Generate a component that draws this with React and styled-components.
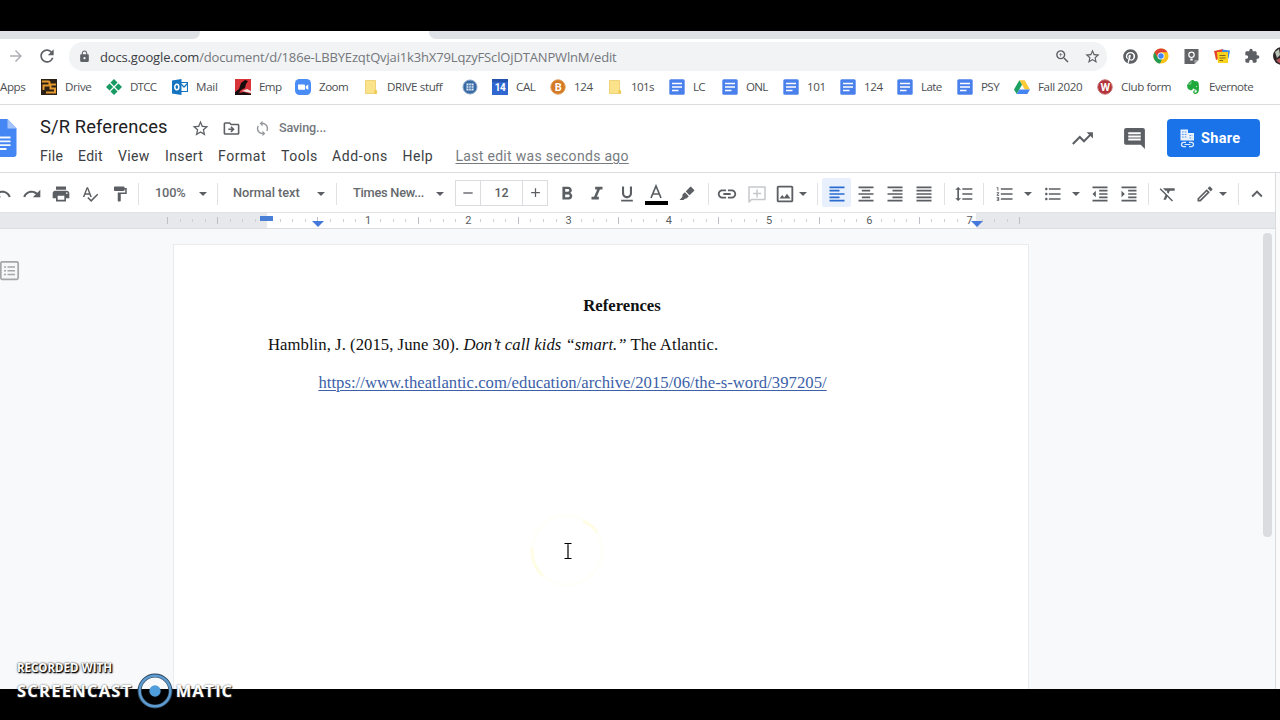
import styled, { createGlobalStyle, css } from 'styled-components';
import {
  MdArrowForward,
  MdRefresh,
  MdLock,
  MdZoomIn,
  MdStarBorder,
  MdExtension,
  MdOutlineDriveFileMove,
  MdSync,
  MdTrendingUp,
  MdComment,
  MdUndo,
  MdRedo,
  MdPrint,
  MdSpellcheck,
  MdFormatPaint,
  MdRemove,
  MdAdd,
  MdFormatBold,
  MdFormatItalic,
  MdFormatUnderlined,
  MdLink,
  MdOutlineImage,
  MdFormatAlignLeft,
  MdFormatAlignCenter,
  MdFormatAlignRight,
  MdFormatAlignJustify,
  MdFormatLineSpacing,
  MdFormatListNumbered,
  MdFormatListBulleted,
  MdFormatIndentDecrease,
  MdFormatIndentIncrease,
  MdFormatClear,
  MdOutlineEdit,
  MdKeyboardArrowUp
} from 'react-icons/md';
import { FaPinterest, FaEvernote } from 'react-icons/fa';

const GlobalStyle = createGlobalStyle`
  * {
    box-sizing: border-box;
  }
  body {
    margin: 0;
    background: #000;
    overflow: hidden;
  }
  svg {
    display: block;
    flex: none;
  }
`;

const Screen = styled.div`
  position: relative;
  width: 1280px;
  height: 720px;
  padding: 31px 0;
  background: #000;
  overflow: hidden;
  display: flex;
  flex-direction: column;
  font-family: Roboto, 'Liberation Sans', sans-serif;
`;

/* browser chrome */

const TabStrip = styled.div`
  flex: none;
  height: 8px;
  display: flex;
  background: #fff;
`;

const TabGap = styled.div`
  background: #dee1e6;
  width: ${p => p.$w}px;
  border-radius: ${p => (p.$side === 'left' ? '0 0 7px 0' : '0 0 0 7px')};
`;

const ActiveTab = styled.div`
  width: 229px;
  background: #fff;
`;

const AddressRow = styled.div`
  flex: none;
  height: 33px;
  padding-top: 1px;
  display: flex;
  align-items: center;
  background: #fff;
  color: #5f6368;
`;

const NavButton = styled.div`
  flex: none;
  width: ${p => p.$w}px;
  display: flex;
  justify-content: center;
  color: ${p => p.$color || '#5c5f63'};
`;

const Omnibox = styled.div`
  flex: none;
  width: 1038px;
  height: 29px;
  margin-left: 7px;
  padding-left: 9px;
  border-radius: 14px;
  background: #f1f3f5;
  display: flex;
  align-items: center;
`;

const Url = styled.div`
  flex: 1;
  padding: 1px 0 0 9px;
  font-family: 'Open Sans', 'Noto Sans', sans-serif;
  font-size: 13px;
  line-height: 20px;
  letter-spacing: ${p => p.$ls || 0}px;
  white-space: nowrap;
  color: #74777b;
  b {
    font-weight: 400;
    color: #3c4043;
  }
`;

const Bookmarks = styled.div`
  flex: none;
  height: 33px;
  display: flex;
  align-items: center;
  padding-bottom: 2px;
  background: #fff;
  border-bottom: 1px solid #dcdde0;
`;

const Bookmark = styled.div`
  flex: none;
  width: ${p => p.$w}px;
  height: 20px;
  display: flex;
  align-items: center;
  gap: 8px;
  font-family: 'Open Sans', 'Noto Sans', sans-serif;
  font-size: 11.6px;
  line-height: 20px;
  letter-spacing: ${p => (p.$ls === undefined ? -0.4 : p.$ls)}px;
  white-space: nowrap;
  color: #4c4f53;
`;

/* docs header */

const Header = styled.div`
  flex: none;
  height: 68px;
  display: flex;
  background: #fff;
  border-bottom: 1px solid #dadce0;
`;

const Logo = styled.div`
  width: 40px;
  padding-top: 14px;
`;

const TitleBlock = styled.div`
  flex: 1;
`;

const TitleRow = styled.div`
  display: flex;
  align-items: center;
  height: 28px;
  margin-top: 9px;
  color: #5f6368;
`;

const DocTitle = styled.div`
  width: 151px;
  font-size: 18.3px;
  line-height: 28px;
  letter-spacing: ${p => p.$ls}px;
  color: #202124;
  white-space: nowrap;
  padding-bottom: 2px;
`;

const Saving = styled.div`
  margin-left: 7px;
  font-size: 12.6px;
  line-height: 18px;
  font-weight: 500;
  letter-spacing: -0.15px;
  color: #74787d;
`;

const MenuBar = styled.div`
  display: flex;
  height: 28px;
  align-items: center;
  font-size: 14px;
  line-height: 20px;
  color: #3c4043;
  white-space: nowrap;
`;

const MenuItem = styled.div`
  flex: none;
  width: ${p => p.$w}px;
  letter-spacing: ${p => (p.$ls === undefined ? 0.3 : p.$ls)}px;
`;

const LastEdit = styled(MenuItem)`
  color: #777b80;
  text-decoration: underline;
  text-underline-offset: 2px;
`;

const HeaderActions = styled.div`
  flex: none;
  display: flex;
  width: 211px;
  align-items: center;
  height: 66px;
  color: #5a5d61;
`;

const ShareButton = styled.div`
  flex: none;
  width: 93px;
  height: 38px;
  margin-left: -7px;
  padding-left: 13px;
  display: flex;
  align-items: center;
  gap: 6px;
  border-radius: 4px;
  background: #1a73e8;
  color: #fff;
  font-size: 14.5px;
  font-weight: 700;
  letter-spacing: 0.3px;
`;

/* toolbar */

const Editor = styled.div`
  flex: 1;
  min-height: 0;
  display: flex;
  background: #fbfbfc;
  overflow: hidden;
`;

const EditorMain = styled.div`
  width: 1276px;
  display: flex;
  flex-direction: column;
  border-right: 1px solid #dadce0;
`;

const Toolbar = styled.div`
  flex: none;
  height: 40px;
  display: flex;
  align-items: center;
  background: #fff;
  border-bottom: 1px solid #e0e2e5;
  overflow: hidden;
  color: #5b5e62;
`;

const Tool = styled.div`
  flex: none;
  width: ${p => p.$w}px;
  height: 29px;
  margin-left: ${p => p.$ml || 0}px;
  padding-top: 3px;
  display: flex;
  flex-direction: column;
  align-items: center;
  justify-content: center;
  ${p =>
    p.$active &&
    css`
      border-radius: 2px;
      background: #e8f0fe;
      color: #2a6bd0;
    `}
  ${p => p.$dim && 'color: #c6c8cb;'}
`;

const SepSlot = styled(Tool)`
  padding-top: 2px;
  &::after {
    content: '';
    width: 1px;
    height: 22px;
    background: #dfe1e4;
  }
`;

const CaretSlot = styled(Tool)`
  padding-top: 2px;
  &::after {
    content: '';
    border: 4.5px solid transparent;
    border-top-color: #5b5e62;
    border-bottom: 0;
  }
`;

const ToolLabel = styled.div`
  flex: none;
  width: ${p => p.$w}px;
  padding-left: ${p => p.$pl}px;
  font-size: 12.8px;
  line-height: 20px;
  font-weight: 500;
  letter-spacing: ${p => p.$ls || 0}px;
  white-space: nowrap;
  color: #66696d;
`;

const SizeBox = styled.div`
  flex: none;
  width: 93px;
  height: 26px;
  margin-left: 3px;
  display: flex;
  border: 1px solid #dadce0;
  font-size: 12.5px;
  font-weight: 500;
`;

const SizeCell = styled.div`
  width: ${p => p.$w}px;
  display: flex;
  align-items: center;
  justify-content: center;
  & + & {
    border-left: 1px solid #dadce0;
  }
`;

const ColorBar = styled.div`
  width: 23px;
  height: 4px;
  margin-top: 2px;
  background: #000;
`;

/* ruler */

const Ruler = styled.div`
  position: relative;
  flex: none;
  height: 16px;
  display: flex;
  background: linear-gradient(90deg, #e6e8ec 267px, #fff 267px, #fff 976px, #e6e8ec 976px);
  border-bottom: 1px solid #d9dce1;
  padding-left: 161.3px;
`;

const RulerCell = styled.div`
  flex: none;
  width: 12.54px;
  height: 15px;
  display: flex;
  align-items: center;
  justify-content: center;
  font-size: 11px;
  color: #5b5e62;
`;

const Tick = styled.div`
  width: 1px;
  height: ${p => (p.$long ? 7 : 3)}px;
  background: ${p => (p.$long ? '#bcbfc3' : '#cdcfd3')};
`;

const FirstLineMarker = styled.div`
  position: absolute;
  left: 260px;
  top: 3px;
  width: 13px;
  height: 5px;
  background: #4a7fd6;
`;

const IndentMarker = styled.div`
  position: absolute;
  left: ${p => p.$x}px;
  top: 8px;
  border: 6px solid transparent;
  border-top: 6.5px solid #4478da;
  border-bottom: 0;
`;

/* document */

const Canvas = styled.div`
  flex: 1;
  min-height: 0;
  display: flex;
  padding-top: 15px;
  background: #f8f9fa;
`;

const OutlineSlot = styled.div`
  flex: none;
  width: 173px;
  padding-top: 17px;
`;

const Page = styled.div`
  flex: none;
  width: 856px;
  height: 460px;
  padding: 42.4px 94px 0;
  background: #fff;
  border: 1px solid #e9ebef;
  font-family: 'Liberation Serif', 'Times New Roman', serif;
  font-size: 16.7px;
  line-height: 38.2px;
  color: #111;
`;

const Heading = styled.div`
  padding-left: 42px;
  text-align: center;
  font-weight: 700;
`;

const Entry = styled.div`
  white-space: nowrap;
  padding-left: ${p => p.$indent || 0}px;
  letter-spacing: ${p => p.$ls || 0}px;
`;

const DocLink = styled.span`
  color: #3c5fa8;
  text-decoration: underline;
  text-underline-offset: 2px;
`;

const Scrollbar = styled.div`
  flex: none;
  width: 9px;
  height: 304px;
  margin: -11px 0 0 234px;
  border-radius: 4px;
  background: #dadce0;
`;

const Pointer = styled.div`
  position: absolute;
  left: 530px;
  top: 514px;
`;

const Watermark = styled.div`
  position: absolute;
  left: 17px;
  top: 661px;
  color: #fff;
  font-family: 'Open Sans', 'Noto Sans', sans-serif;
  font-weight: 700;
`;

const RecordedWith = styled.div`
  font-size: 11.5px;
  line-height: 14px;
  letter-spacing: ${p => p.$ls}px;
  text-shadow: 1px 1px 1px #000, 0 0 2px #222, 1px 1px 2px #333;
`;

const Brand = styled.div`
  display: flex;
  align-items: center;
  height: 34px;
  margin-top: -1px;
  font-size: 16.5px;
  line-height: 20px;
  text-shadow: 0 0 2px #555, 1px 1px 1px #222;
`;

const BrandWord = styled.div`
  width: ${p => p.$w}px;
  letter-spacing: ${p => p.$ls}px;
`;

const FolderIcon = () => (
  <svg width="16" height="16" viewBox="0 0 16 16">
    <path d="M2.5 1.5h10v9l1.2 1v3H2.500z" fill="#fbe38c" stroke="#eccb62" strokeWidth=".8" />
    <path d="M11.500 10.500l2 1.500v2.500h-2z" fill="#eec64a" />
  </svg>
);

const DocIcon = () => (
  <svg width="16" height="16" viewBox="0 0 16 16">
    <rect x=".3" y=".3" width="15.400" height="15.400" rx="1.500" fill="#4a80ec" />
    <path d="M3 4.500h10M3 8h10M3 11.500h6.500" stroke="#fff" strokeWidth="1.700" />
  </svg>
);

const SchoolIcon = () => (
  <svg width="16" height="16" viewBox="0 0 16 16">
    <path d="M0 0h16v16H0z" fill="#2d2116" />
    <path d="M1 2.500h6.500c1.500 0 1.500 4 0 4H2.500V11M15 5.500H9.500v4H14v4H5" fill="none" stroke="#e49a2e" strokeWidth="2" />
  </svg>
);

const DtccIcon = () => (
  <svg width="16" height="16" viewBox="0 0 16 16">
    <path d="M8 0l8 8-8 8-8-8z" fill="#179a63" />
    <path d="M3.500 3.500l9 9M12.500 3.500l-9 9" stroke="#fff" strokeWidth="1.200" />
  </svg>
);

const OutlookIcon = () => (
  <svg width="16" height="16" viewBox="0 0 16 16">
    <path d="M8 3.500h7.500v9H8z" fill="#fff" stroke="#1673c0" strokeWidth="1.200" />
    <path d="M9 5l3 3 3.500-3.500" fill="none" stroke="#1673c0" strokeWidth="1.300" />
    <path d="M0 1.500L9.500 0v16L0 14.500z" fill="#1673c0" />
    <ellipse cx="4.800" cy="8" rx="2" ry="2.700" fill="none" stroke="#fff" strokeWidth="1.500" />
  </svg>
);

const EmpIcon = () => (
  <svg width="16" height="16" viewBox="0 0 16 16">
    <path d="M0 0h16v16H0z" fill="#d8343a" />
    <path d="M0 13l4-3 2-6 4-3 3 1-2 3-1 4-4 2-2 3 5-1 7 2v1H0z" fill="#190c0e" />
    <path d="M7 12l5-2 4 2v2z" fill="#f3e4e2" />
  </svg>
);

const ZoomIcon = () => (
  <svg width="16" height="16" viewBox="0 0 16 16">
    <rect width="16" height="16" rx="4.500" fill="#4a8cf6" />
    <path d="M3 5.500h6a1 1 0 011 1v4.200H4.200A1.200 1.200 0 013 9.500zM10.700 7.200L13.300 5.500v5.200l-2.600-1.500z" fill="#fff" />
  </svg>
);

const GridBadgeIcon = () => (
  <svg width="16" height="16" viewBox="0 0 16 16">
    <circle cx="8" cy="8" r="7" fill="#376aa5" stroke="#88a6c8" strokeWidth="1" />
    <path d="M4.500 4.500h7v7h-7z" fill="#e4edf8" />
    <path d="M4.500 6.800h7M4.500 9.200h7M6.800 4.500v7M9.200 4.500v7" stroke="#376aa5" strokeWidth=".8" />
  </svg>
);

const CalIcon = () => (
  <svg width="16" height="16" viewBox="0 0 16 16">
    <path d="M0 0h16v16H0z" fill="#2f66d0" />
    <path d="M0 0h16v3H0z" fill="#2453ae" />
    <text x="8" y="12.300" fill="#fff" fontSize="10" fontWeight="700" fontFamily="Roboto" textAnchor="middle">14</text>
  </svg>
);

const RoundLetterIcon = ({ letter, color, edge }) => (
  <svg width="16" height="16" viewBox="0 0 16 16">
    <circle cx="8" cy="8" r="7.200" fill={color} stroke={edge} />
    <text x="8" y="12" fill="#fff" fontSize="11" fontWeight="700" fontFamily="Roboto" textAnchor="middle">{letter}</text>
  </svg>
);

const DriveIcon = () => (
  <svg width="16" height="16" viewBox="0 0 16 16">
    <path d="M5.400 1.200h5.200L16 10.500h-5.200z" fill="#fbc934" />
    <path d="M5.400 1.200L8 5.700 2.700 15 0 10.500z" fill="#1aa162" />
    <path d="M5.400 10.500H16L13.300 15H2.700z" fill="#4484f3" />
  </svg>
);

const ChromeIcon = () => (
  <svg width="16" height="16" viewBox="0 0 16 16">
    <circle cx="8" cy="8" r="7.600" fill="#fbc116" />
    <path d="M1.400 4.200A7.600 7.600 0 0114.600 4.300H8L5 10z" fill="#de4435" />
    <path d="M1.400 4.200L5 10l4 1.500-2 4A7.600 7.600 0 011.400 4.200z" fill="#249b55" />
    <circle cx="8" cy="8" r="3.500" fill="#fff" />
    <circle cx="8" cy="8" r="2.700" fill="#4285f4" />
  </svg>
);

const KeepBadgeIcon = () => (
  <svg width="15" height="15" viewBox="0 0 15 15">
    <path d="M.5 0h14v11l-4 4H.500z" fill="#626468" />
    <path d="M10.500 15v-4h4z" fill="#a5a7aa" />
    <circle cx="7.500" cy="5.800" r="2.700" fill="none" stroke="#fff" strokeWidth="1.200" />
    <path d="M6.300 9.500h2.400v2H6.300z" fill="#fff" />
  </svg>
);

const NotesIcon = () => (
  <svg width="16" height="16" viewBox="0 0 16 16">
    <path d="M0 3l9-2 1 8-8 3z" fill="#e5452f" />
    <path d="M8 1.500l8 1-1.500 8-6-1z" fill="#3f8be4" />
    <path d="M3 4h11v11H4z" fill="#fdd21c" />
    <path d="M5.500 7.500h6M5.500 10h6M5.500 12.500h3.500" stroke="#7c6a20" strokeWidth="1" />
  </svg>
);

const AvatarIcon = () => (
  <svg width="18" height="18" viewBox="0 0 18 18">
    <circle cx="9" cy="9" r="9" fill="#2c2527" />
    <path d="M2 5l4-3 1 6-3 3z" fill="#b9c4b6" />
    <path d="M3 13l4-2 2 6-3-1z" fill="#b5535c" />
  </svg>
);

const DocsLogo = () => (
  <svg width="17" height="38" viewBox="0 0 17 38">
    <path d="M-12 0H7.500l9 9.500V35a3 3 0 01-3 3H-12z" fill="#4486f4" />
    <path d="M7.500 0l9 9.500h-9z" fill="#a3c3fa" />
    <path d="M0 18.500h10.500M0 22.300h10.500M0 26.200h10.500M0 30h6.500" stroke="#f3f7fe" strokeWidth="1.800" />
  </svg>
);

const DomainLinkIcon = () => (
  <svg width="15" height="19" viewBox="0 0 15 19">
    <path d="M.5.500h7.500v3.500h6v7.500H.5z" fill="#e9f1fd" />
    <path d="M2 3h4.500M2 5.500h4.500M2 8h4.500M9.500 6.500h3M9.500 9h3" stroke="#5b97ec" strokeWidth="1" strokeDasharray="1.700 1" />
    <path d="M6 13.400H3.600a2.100 2.100 0 000 4.200H6M9 13.400h2.400a2.100 2.100 0 010 4.200H9M4.500 15.500h6" fill="none" stroke="#dfeafc" strokeWidth="1.200" />
  </svg>
);

const HighlighterIcon = () => (
  <svg width="16" height="16" viewBox="0 0 16 16">
    <path d="M10.500 1.500l1.300-1 3.700 3.700-1 1.300-4 3.700-3.700-3.700z" fill="currentColor" />
    <path d="M5.800 6.200l4 4-2.300 2.300-1.700.2-1.300 1.300H.5l2.800-3 .2-2.500z" fill="currentColor" />
  </svg>
);

const AddCommentIcon = () => (
  <svg width="18" height="17" viewBox="0 0 18 17">
    <path d="M1 16V1h16v12.500H3.500z" fill="none" stroke="currentColor" strokeWidth="1.500" strokeLinejoin="round" />
    <path d="M9 3.500v8M5 7.500h8" stroke="currentColor" strokeWidth="1.500" />
  </svg>
);

const TextColorIcon = () => (
  <svg width="14" height="15" viewBox="0 0 14 15">
    <path d="M2 14L7 2l5 12M3.900 10h6.200" fill="none" stroke="currentColor" strokeWidth="1.700" />
  </svg>
);

const OutlineIcon = () => (
  <svg width="20" height="20" viewBox="0 0 20 20">
    <rect x=".8" y=".8" width="17.400" height="17.500" rx="1.500" fill="#f6f7f8" stroke="#a4a6aa" strokeWidth="1.700" />
    <path d="M4 6h2M4 9.700h2M4 13.500h2M7.500 6H15M7.500 9.700H15M7.500 13.500H15" stroke="#a4a6aa" strokeWidth="1.600" />
  </svg>
);

const RecordIcon = () => (
  <svg width="36" height="36" viewBox="0 0 36 36">
    <circle cx="18" cy="18" r="15.500" fill="none" stroke="#2d485f" strokeWidth="4" />
    <circle cx="18" cy="18" r="15.300" fill="none" stroke="#5d9bd0" strokeWidth="2.400" />
    <circle cx="18" cy="18" r="5.700" fill="#4f9edb" />
  </svg>
);

const bookmarks = [
  { icon: <SchoolIcon />, label: 'Drive', w: 65 },
  { icon: <DtccIcon />, label: 'DTCC', w: 66, ls: -0.8 },
  { icon: <OutlookIcon />, label: 'Mail', w: 63, ls: -0.3 },
  { icon: <EmpIcon />, label: 'Emp', w: 60, ls: -0.6 },
  { icon: <ZoomIcon />, label: 'Zoom', w: 68, ls: -0.5 },
  { icon: <FolderIcon />, label: 'DRIVE stuff', w: 99 },
  { icon: <GridBadgeIcon />, label: '', w: 30 },
  { icon: <CalIcon />, label: 'CAL', w: 58, ls: -0.4 },
  { icon: <RoundLetterIcon letter="B" color="#d47a24" edge="#e09a52" />, label: '124', w: 57 },
  { icon: <FolderIcon />, label: '101s', w: 62, ls: -0.6 },
  { icon: <DocIcon />, label: 'LC', w: 53, ls: -0.9 },
  { icon: <DocIcon />, label: 'ONL', w: 61, ls: -0.8 },
  { icon: <DocIcon />, label: '101', w: 57 },
  { icon: <DocIcon />, label: '124', w: 57 },
  { icon: <DocIcon />, label: 'Late', w: 60, ls: -0.6 },
  { icon: <DocIcon />, label: 'PSY', w: 57, ls: -0.6 },
  { icon: <DriveIcon />, label: 'Fall 2020', w: 83 },
  { icon: <RoundLetterIcon letter="W" color="#b3333a" edge="#c4686c" />, label: 'Club form', w: 88 },
  { icon: <FaEvernote size={16} color="#1fa83c" />, label: 'Evernote', w: 80, ls: -0.5 }
];

const menus = [
  { label: 'File', w: 38 },
  { label: 'Edit', w: 40 },
  { label: 'View', w: 47 },
  { label: 'Insert', w: 53, ls: 0.4 },
  { label: 'Format', w: 63, ls: 0.55 },
  { label: 'Tools', w: 51, ls: 0.5 },
  { label: 'Add-ons', w: 70.5, ls: 0.6 },
  { label: 'Help', w: 53, ls: 0.5 }
];

// eighths of an inch, starting one inch left of the margin
const rulerCells = Array.from({ length: 69 }, (_, i) => i);

const renderRulerCell = i => {
  if (i === 8) return null;
  if (i > 8 && i % 8 === 0) return i / 8 - 1;
  return <Tick $long={i % 4 === 0} />;
};

const Browser = () => (
  <>
    <TabStrip>
      <TabGap $w={200} $side="left" />
      <ActiveTab />
      <TabGap $w={851} $side="right" />
    </TabStrip>
    <AddressRow>
      <NavButton $w={32} $color="#aeb0b4">
        <MdArrowForward size={18} />
      </NavButton>
      <NavButton $w={30}>
        <MdRefresh size={20} />
      </NavButton>
      <Omnibox>
        <MdLock size={13} />
        <Url $ls={-0.15}>
          <b>docs.google.com</b>/document/d/186e-LBBYEzqtQvjai1k3hX79LqzyFSclOjDTANPWlnM/edit
        </Url>
        <NavButton $w={30}>
          <MdZoomIn size={17} />
        </NavButton>
        <NavButton $w={30}>
          <MdStarBorder size={17} />
        </NavButton>
      </Omnibox>
      <NavButton $w={46}>
        <FaPinterest size={15} />
      </NavButton>
      <NavButton $w={16}>
        <ChromeIcon />
      </NavButton>
      <NavButton $w={45}>
        <KeepBadgeIcon />
      </NavButton>
      <NavButton $w={16}>
        <NotesIcon />
      </NavButton>
      <NavButton $w={43}>
        <MdExtension size={16} />
      </NavButton>
      <AvatarIcon />
    </AddressRow>
    <Bookmarks>
      <Bookmark $w={41}>Apps</Bookmark>
      {bookmarks.map((b, i) => (
        <Bookmark key={i} $w={b.w} $ls={b.ls}>
          {b.icon}
          {b.label}
        </Bookmark>
      ))}
    </Bookmarks>
  </>
);

const DocsHeader = () => (
  <Header>
    <Logo>
      <DocsLogo />
    </Logo>
    <TitleBlock>
      <TitleRow>
        <DocTitle $ls={0.15}>S/R References</DocTitle>
        <MdStarBorder size={19} />
        <NavButton $w={43}>
          <MdOutlineDriveFileMove size={19} />
        </NavButton>
        <NavButton $w={19} $color="#94979b">
          <MdSync size={17} />
        </NavButton>
        <Saving>Saving...</Saving>
      </TitleRow>
      <MenuBar>
        {menus.map(m => (
          <MenuItem key={m.label} $w={m.w} $ls={m.ls}>
            {m.label}
          </MenuItem>
        ))}
        <LastEdit $w={200}>Last edit was seconds ago</LastEdit>
      </MenuBar>
    </TitleBlock>
    <HeaderActions>
      <NavButton $w={26}>
        <MdTrendingUp size={25} />
      </NavButton>
      <NavButton $w={79}>
        <MdComment size={25} />
      </NavButton>
      <ShareButton>
        <DomainLinkIcon />
        Share
      </ShareButton>
    </HeaderActions>
  </Header>
);

const DocsToolbar = () => (
  <Toolbar>
    <Tool $w={30} $ml={-13}><MdUndo size={20} /></Tool>
    <Tool $w={30}><MdRedo size={20} /></Tool>
    <Tool $w={28}><MdPrint size={20} /></Tool>
    <Tool $w={30}><MdSpellcheck size={18} /></Tool>
    <Tool $w={30}><MdFormatPaint size={18} /></Tool>
    <SepSlot $w={7} />
    <ToolLabel $w={48} $pl={13} $ls={-0.2}>100%</ToolLabel>
    <CaretSlot $w={26} />
    <SepSlot $w={2} />
    <ToolLabel $w={90} $pl={15} $ls={-0.05}>Normal text</ToolLabel>
    <CaretSlot $w={26} />
    <SepSlot $w={4} />
    <ToolLabel $w={90} $pl={15} $ls={-0.25}>Times New...</ToolLabel>
    <CaretSlot $w={24} />
    <SizeBox>
      <SizeCell $w={24}><MdRemove size={16} /></SizeCell>
      <SizeCell $w={43}>12</SizeCell>
      <SizeCell $w={25}><MdAdd size={15} /></SizeCell>
    </SizeBox>
    <Tool $w={38}><MdFormatBold size={22} /></Tool>
    <Tool $w={22}><MdFormatItalic size={22} /></Tool>
    <Tool $w={37}><MdFormatUnderlined size={20} /></Tool>
    <Tool $w={22}>
      <TextColorIcon />
      <ColorBar />
    </Tool>
    <Tool $w={40}><HighlighterIcon /></Tool>
    <SepSlot $w={2} />
    <Tool $w={36}><MdLink size={22} /></Tool>
    <Tool $w={24} $dim><AddCommentIcon /></Tool>
    <Tool $w={26} $ml={3}><MdOutlineImage size={22} /></Tool>
    <CaretSlot $w={10} />
    <SepSlot $w={1} $ml={9} />
    <Tool $w={29} $ml={4} $active><MdFormatAlignLeft size={20} /></Tool>
    <Tool $w={30}><MdFormatAlignCenter size={20} /></Tool>
    <Tool $w={28}><MdFormatAlignRight size={20} /></Tool>
    <Tool $w={30}><MdFormatAlignJustify size={20} /></Tool>
    <SepSlot $w={10} />
    <Tool $w={30}><MdFormatLineSpacing size={20} /></Tool>
    <SepSlot $w={9} />
    <Tool $w={34}><MdFormatListNumbered size={20} /></Tool>
    <CaretSlot $w={12} />
    <Tool $w={38}><MdFormatListBulleted size={20} /></Tool>
    <CaretSlot $w={7} />
    <Tool $w={42}><MdFormatIndentDecrease size={20} /></Tool>
    <Tool $w={16}><MdFormatIndentIncrease size={20} /></Tool>
    <SepSlot $w={23} />
    <Tool $w={16}><MdFormatClear size={20} /></Tool>
    <Tool $w={21} $ml={18}><MdOutlineEdit size={20} /></Tool>
    <CaretSlot $w={16} />
    <SepSlot $w={14} />
    <Tool $w={24}><MdKeyboardArrowUp size={22} /></Tool>
  </Toolbar>
);

const App = () => (
  <>
    <GlobalStyle />
    <Screen>
      <Browser />
      <DocsHeader />
      <Editor>
        <EditorMain>
          <DocsToolbar />
          <Ruler>
            {rulerCells.map(i => (
              <RulerCell key={i}>{renderRulerCell(i)}</RulerCell>
            ))}
            <FirstLineMarker />
            <IndentMarker $x={312} />
            <IndentMarker $x={971} />
          </Ruler>
          <Canvas>
            <OutlineSlot>
              <OutlineIcon />
            </OutlineSlot>
            <Page>
              <Heading>References</Heading>
              <Entry $ls={0.04}>
                Hamblin, J. (2015, June 30). <i>Don’t call kids “smart.”</i> The Atlantic.
              </Entry>
              <Entry $indent={50.4} $ls={0.02}>
                <DocLink>https://www.theatlantic.com/education/archive/2015/06/the-s-word/397205/</DocLink>
              </Entry>
            </Page>
            <Scrollbar />
          </Canvas>
        </EditorMain>
      </Editor>
      <Pointer>
        <svg width="76" height="76" viewBox="0 0 76 76">
          <circle cx="37" cy="36" r="35" fill="none" stroke="#fffffa" strokeWidth="3" />
          <path d="M53 7a34 34 0 0114 11M2 34a35 35 0 0011 28" fill="none" stroke="#fffde6" strokeWidth="3" />
          <path d="M34.500 29.500h3l.5.500.500-.5h3M38 29.500v15M34.500 44.500h3l.5-.5.500.500h3" fill="none" stroke="#000" strokeWidth="1.200" />
        </svg>
      </Pointer>
      <Watermark>
        <RecordedWith $ls={0}>RECORDED WITH</RecordedWith>
        <Brand>
          <BrandWord $w={120} $ls={1.25}>SCREENCAST</BrandWord>
          <RecordIcon />
          <BrandWord $w={64} $ls={1}>&#8202;MATIC</BrandWord>
        </Brand>
      </Watermark>
    </Screen>
  </>
);

export default App;
